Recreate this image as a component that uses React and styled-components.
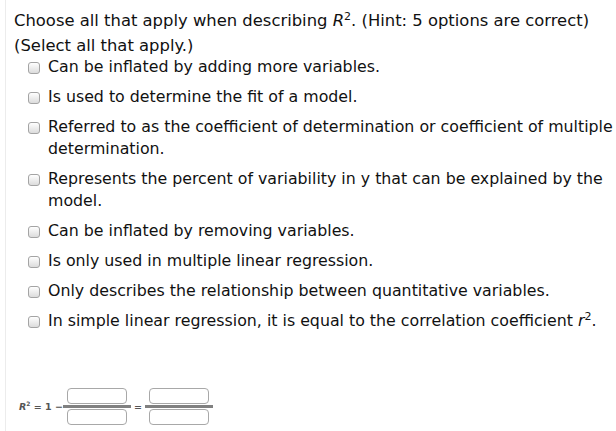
import React from 'react';
import styled, { createGlobalStyle } from 'styled-components';

const Global = createGlobalStyle`
    html, body {
        margin: 0;
        padding: 0;
        background: #fff;
    }
    body {
        font-family: 'DejaVu Sans', Verdana, sans-serif;
        color: #111;
    }
`;

const Page = styled.div`
    margin-left: 5px;
    border-left: 1px solid #ececec;
    height: 431px;
    padding: 8px 0 0 8px;
    box-sizing: border-box;
    overflow: hidden;
`;

const Prompt = styled.div`
    font-size: 16.4px;
    line-height: 25px;
`;

const Var = styled.i`
    font-style: italic;
`;

const Sup = styled.sup`
    font-size: ${props => props.size || 11}px;
    line-height: 0;
`;

const Options = styled.ul`
    list-style: none;
    margin: -2px 0 0 0;
    padding: 0 0 0 14px;
    display: flex;
    flex-direction: column;
    gap: 8px;
`;

const Option = styled.li`
    display: flex;
    align-items: flex-start;
    font-size: 15.8px;
    line-height: 22px;
    white-space: nowrap;
`;

const Text = styled.span`
    white-space: normal;
`;

const Box = styled.span`
    flex: none;
    width: 10px;
    height: 10px;
    margin: 6px 8px 0 0;
    border: 1px solid #a4a4a4;
    border-radius: 3px;
    background: linear-gradient(#ffffff, #dcdcdc);
`;

const Formula = styled.div`
    display: flex;
    align-items: center;
    margin: 56px 0 0 5px;
    font-size: 9.5px;
    font-weight: bold;
    color: #555;
`;

const Lead = styled.span`
    margin-right: 0;
`;

const Equals = styled.span`
    margin: 0 3px;
`;

const Fraction = styled.div`
    display: flex;
    flex-direction: column;
    align-items: center;
    width: 68px;
`;

const Slot = styled.div`
    width: 58px;
    height: 14px;
    border: 1px solid #a8a8a8;
    border-radius: 4px;
    background: #fff;
`;

const Bar = styled.div`
    width: 68px;
    height: 3px;
    margin: 1px 0;
    background: #808080;
`;

const options = [
    'Can be inflated by adding more variables.',
    'Is used to determine the fit of a model.',
    'Referred to as the coefficient of determination or coefficient of multiple determination.',
    'Represents the percent of variability in y that can be explained by the model.',
    'Can be inflated by removing variables.',
    'Is only used in multiple linear regression.',
    'Only describes the relationship between quantitative variables.',
];

export default function App() {
    return (
        <Page>
            <Global />
            <Prompt>
                Choose all that apply when describing <Var>R</Var>
                <Sup>2</Sup>. (Hint: 5 options are correct)
                <br />
                (Select all that apply.)
            </Prompt>
            <Options>
                {options.map(text => (
                    <Option key={text}>
                        <Box />
                        <Text>{text}</Text>
                    </Option>
                ))}
                <Option>
                    <Box />
                    <Text>
                        In simple linear regression, it is equal to the correlation coefficient <Var>r</Var>
                        <Sup>2</Sup>.
                    </Text>
                </Option>
            </Options>
            <Formula>
                <Lead>
                    <Var>R</Var>
                    <Sup size={6}>2</Sup> = 1 −
                </Lead>
                <Fraction>
                    <Slot />
                    <Bar />
                    <Slot />
                </Fraction>
                <Equals>=</Equals>
                <Fraction>
                    <Slot />
                    <Bar />
                    <Slot />
                </Fraction>
            </Formula>
        </Page>
    );
}
